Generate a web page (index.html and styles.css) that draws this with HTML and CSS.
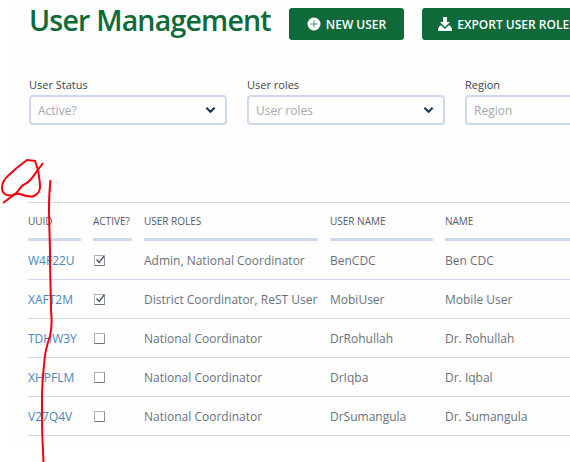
FILE: index.html
```
<!DOCTYPE html>
<html lang="en">

<head>
    <meta charset="UTF-8">
    <title>User Management</title>

    <link rel="stylesheet" href="styles.css">
</head>

<body>
    <div class="page">
        <div class="top-bar">
            <h1 class="title">User Management</h1>
            <button class="btn btn-new">
                <svg class="btn-icon" viewBox="0 0 14 14" width="14" height="14">
                    <circle cx="7" cy="7" r="6.500" fill="#fff"/>
                    <path d="M7 3.500v7M3.500 7h7" stroke="#4d9270" stroke-width="1"/>
                </svg>
                NEW USER
            </button>
            <button class="btn btn-export">
                <svg class="btn-icon" viewBox="0 0 14 14" width="14" height="14">
                    <path d="M5 0h4v5h3L7 10 2 5h3z" fill="#fff"/>
                    <path d="M2 8.500h1.500L7 12l3.500-3.500H12l2 3v2.500H0v-2.500z" fill="#fff"/>
                </svg>
                EXPORT USER ROLES
            </button>
        </div>

        <div class="filters">
            <div class="filter">
                <label class="filter-label">User Status</label>
                <div class="select">
                    <span>Active?</span>
                    <svg class="chevron" viewBox="0 0 12 8" width="11" height="8"><path d="M1.500 1.500 6 6l4.500-4.500" fill="none" stroke="#12385a" stroke-width="2.200"/></svg>
                </div>
            </div>
            <div class="filter">
                <label class="filter-label">User roles</label>
                <div class="select">
                    <span>User roles</span>
                    <svg class="chevron" viewBox="0 0 12 8" width="11" height="8"><path d="M1.500 1.500 6 6l4.500-4.500" fill="none" stroke="#12385a" stroke-width="2.200"/></svg>
                </div>
            </div>
            <div class="filter">
                <label class="filter-label">Region</label>
                <div class="select">
                    <span>Region</span>
                </div>
            </div>
        </div>

        <table class="users">
            <thead>
                <tr>
                    <th class="col-uuid"><div>UUID</div></th>
                    <th class="col-active"><div>ACTIVE?</div></th>
                    <th class="col-roles"><div>USER ROLES</div></th>
                    <th class="col-login"><div>USER NAME</div></th>
                    <th class="col-name"><div>NAME</div></th>
                </tr>
            </thead>
            <tbody>
                <tr>
                    <td><a href="#">W4F22U</a></td>
                    <td><span class="check"><svg viewBox="0 0 12 12" width="12" height="12"><path d="M2.500 5.500 5.200 8.500 10 2" fill="none" stroke="#46535f" stroke-width="1.300"/></svg></span></td>
                    <td>Admin, National Coordinator</td>
                    <td>BenCDC</td>
                    <td>Ben CDC</td>
                </tr>
                <tr>
                    <td><a href="#">XAFT2M</a></td>
                    <td><span class="check"><svg viewBox="0 0 12 12" width="12" height="12"><path d="M2.500 5.500 5.200 8.500 10 2" fill="none" stroke="#46535f" stroke-width="1.300"/></svg></span></td>
                    <td>District Coordinator, ReST User</td>
                    <td>MobiUser</td>
                    <td>Mobile User</td>
                </tr>
                <tr>
                    <td><a href="#">TDHW3Y</a></td>
                    <td><span class="check"></span></td>
                    <td>National Coordinator</td>
                    <td>DrRohullah</td>
                    <td>Dr. Rohullah</td>
                </tr>
                <tr>
                    <td><a href="#">XHPFLM</a></td>
                    <td><span class="check"></span></td>
                    <td>National Coordinator</td>
                    <td>DrIqba</td>
                    <td>Dr. Iqbal</td>
                </tr>
                <tr>
                    <td><a href="#">V27Q4V</a></td>
                    <td><span class="check"></span></td>
                    <td>National Coordinator</td>
                    <td>DrSumangula</td>
                    <td>Dr. Sumangula</td>
                </tr>
            </tbody>
        </table>
    </div>

    <!-- red pen marks drawn over the screenshot -->
    <svg class="scribble" viewBox="0 0 570 462" width="570" height="462">
        <path d="M36 161 L27 160 C20 165 14 170 9 175 C4 179 2 184 2 188 C2 192 4 194 7 195 C11 196 15 195 18 191 C21 187 22 185 25 184 C30 182 33 177 37 171 L43 163" />
        <path d="M3 203 L11 197 C14 194 17 193 20 194 C25 196 31 197 34 196 C38 194 40 191 40 187 C40 181 39 176 38 170 L35 161" />
        <path d="M50.500 180 C49.500 190 49 198 49 207 C49 225 50 240 50 255 C50 275 51 295 51 310 C52 320 51.500 330 50 336 C47 345 45 352 44.500 360 C43 375 42 385 42 398 C42 415 42 430 42.500 440 L43.500 462" />
    </svg>
</body>

</html>
```
FILE: styles.css
```
html,
body {
    margin: 0;
    height: 100%;
    overflow: hidden;
}

body {
    font-family: "Open Sans", Arial, sans-serif;
    background-color: #fff;
    color: #68727c;
    position: relative;
}

.page {
    width: 900px;
    height: 444px;
    margin-left: 10px;
    padding-left: 19px;
    background-color: #fefefe;
}

/* Title and buttons */
.top-bar {
    display: flex;
    align-items: flex-start;
    height: 80px;
    padding-top: 8px;
    box-sizing: border-box;
}

.title {
    width: 260px;
    margin: -8px 0 0 0;
    font-size: 28.500px;
    line-height: 40px;
    font-weight: 600;
    letter-spacing: -0.8px;
    color: #0f6a3a;
    white-space: nowrap;
}

.btn {
    display: flex;
    align-items: center;
    justify-content: center;
    height: 32px;
    border: 0;
    border-radius: 3px;
    background-color: #0f6a3a;
    color: #fff;
    font-family: inherit;
    font-size: 12px;
    font-weight: 600;
    white-space: nowrap;
}

.btn-icon {
    margin-right: 5px;
}

.btn-new {
    width: 115px;
    margin-right: 18px;
}

.btn-export {
    width: 170px;
}

/* Filters */
.filters {
    display: flex;
    gap: 20px;
}

.filter {
    width: 198px;
}

.filter-label {
    display: block;
    font-size: 11px;
    line-height: 10px;
    color: #3a4652;
}

.select {
    display: flex;
    align-items: center;
    justify-content: space-between;
    box-sizing: border-box;
    height: 30px;
    margin-top: 5px;
    padding: 0 9px 0 7px;
    border: 2px solid #cdd9ec;
    border-radius: 4px;
    font-size: 12px;
    color: #a3a9b0;
}

/* Table */
.users {
    margin: 77px 0 0 -1px;
    width: 900px;
    table-layout: fixed;
    border-collapse: collapse;
    font-size: 12px;
}

.users tr {
    border-bottom: 1px solid #cdd9ec;
}

.users thead tr {
    border-top: 1px solid #cdd9ec;
    border-bottom: 0;
}

.users th {
    padding: 0 12px 0 0;
    text-align: left;
    font-size: 10px;
    font-weight: 500;
    color: #515c67;
}

.users th div {
    height: 34px;
    padding-top: 1px;
    line-height: 34px;
    border-bottom: 3px solid #cdd9ec;
}

.col-uuid {
    width: 53px;
}

.col-active {
    width: 39px;
}

.col-roles {
    width: 174px;
}

.col-login {
    width: 103px;
}

.users td {
    height: 38px;
    padding: 0;
    white-space: nowrap;
}

.users a {
    color: #4a86bd;
    text-decoration: none;
}

.check {
    display: block;
    box-sizing: border-box;
    width: 11px;
    height: 11px;
    margin-left: 1px;
    border: 1px solid #aab2ba;
    border-bottom-color: #66727e;
    border-right-color: #8b949d;
    border-radius: 1px;
}

.check svg {
    display: block;
    margin: -2px 0 0 -1px;
}

/* Pen marks */
.scribble {
    position: absolute;
    left: 0;
    top: 0;
    pointer-events: none;
}

.scribble path {
    fill: none;
    stroke: #f2000f;
    stroke-width: 2;
}
```
